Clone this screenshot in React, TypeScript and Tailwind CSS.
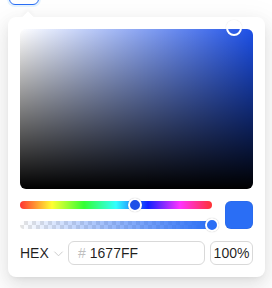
import React from "react";

const hue = 215;

export default function App() {
  const huePct = (hue / 360) * 100;

  return (
    <div className="relative h-[288px] w-[272px] overflow-hidden bg-white font-['Liberation_Sans',Arial,sans-serif] text-[14px] text-[rgba(0,0,0,0.88)]">
      {/* trigger */}
      <div className="ml-[9px] -mt-[26px] h-[31px] w-[30px] rounded-[6px] border border-[#2a6ef5] bg-white shadow-[0_0_0_2px_rgba(5,145,255,0.1)]" />

      {/* popover */}
      <div className="relative ml-[8px] mt-[12px] w-[257px] rounded-[8px] bg-white p-[12px] shadow-[0_6px_16px_0_rgba(0,0,0,0.08),0_3px_6px_-4px_rgba(0,0,0,0.12),0_9px_28px_8px_rgba(0,0,0,0.05)]">
        <div className="absolute -top-[4px] left-[16px] h-[8px] w-[8px] rotate-45 bg-white shadow-[-2px_-2px_4px_rgba(0,0,0,0.03)]" />

        {/* saturation panel */}
        <div className="relative h-[160px] w-[233px] rounded-[6px] bg-[#1d50e8] bg-[image:linear-gradient(to_top,#000,rgba(0,0,0,0)),linear-gradient(to_right,#fff,rgba(255,255,255,0))]">
          <div className="absolute left-[214px] -top-[1px] h-[16px] w-[16px] -translate-x-1/2 -translate-y-1/2 rounded-full border-2 border-white shadow-[0_0_1px_rgba(0,0,0,0.2)]" />
        </div>

        {/* sliders */}
        <div className="mt-[12px] flex gap-[13px]">
          <div className="flex w-[193px] flex-col gap-[12px]">
            <div className="relative h-[8px] rounded-full bg-[linear-gradient(to_right,#f33,#ff3,#3f3,#3ff,#12f,#f3f,#f33)]">
              <div
                className="absolute top-1/2 h-[14px] w-[14px] -translate-x-1/2 -translate-y-1/2 rounded-full border-2 border-white bg-[#1d50e8] shadow-[0_0_1px_rgba(0,0,0,0.3)]"
                style={{ left: `${huePct}%` }}
              />
            </div>
            <div className="relative h-[8px] rounded-full bg-[image:linear-gradient(to_right,rgba(42,110,245,0),#2a6ef5),conic-gradient(#e4e4e4_25%,#fff_0_50%,#e4e4e4_0_75%,#fff_0)] bg-[length:100%_100%,8px_8px]">
              <div className="absolute left-full top-1/2 h-[14px] w-[14px] -translate-x-1/2 -translate-y-1/2 rounded-full border-2 border-white bg-[#2a6ef5] shadow-[0_0_1px_rgba(0,0,0,0.3)]" />
            </div>
          </div>
          <div className="h-[28px] w-[28px] rounded-[6px] bg-[#2a6ef5] shadow-[inset_0_0_1px_rgba(0,0,0,0.25)]" />
        </div>

        {/* inputs */}
        <div className="mt-[12px] flex h-[24px] items-center">
          <div className="flex w-[48px] items-center gap-[4px]">
            <span>HEX</span>
            <svg width="11" height="11" viewBox="0 0 12 12" fill="none">
              <path d="M1.5 4l4.5 4.5L10.5 4" stroke="#c8c8c8" strokeWidth="1" />
            </svg>
          </div>
          <div className="flex h-[24px] w-[137px] items-center rounded-[6px] border border-[#d9d9d9] px-[9px]">
            <span className="mr-[4px] text-[#bfbfbf]">#</span>
            <span>1677FF</span>
          </div>
          <div className="ml-[5px] flex h-[24px] w-[43px] items-center justify-center rounded-[6px] border border-[#d9d9d9]">
            100%
          </div>
        </div>
      </div>
    </div>
  );
}
